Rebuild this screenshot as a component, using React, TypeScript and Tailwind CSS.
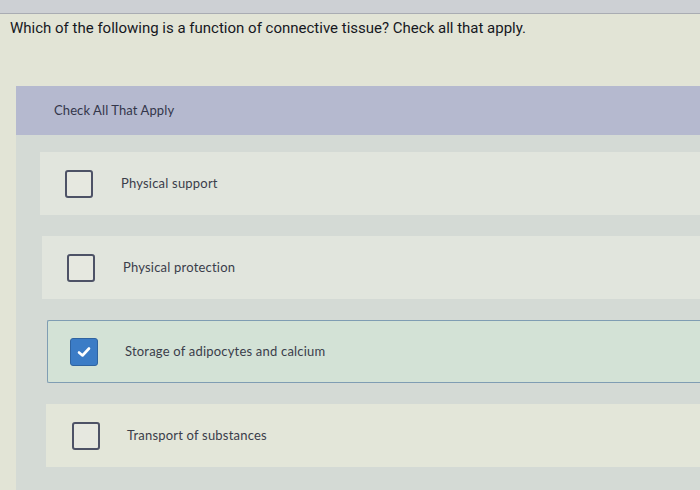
import React from "react";

const options = [
  { label: "Physical support", checked: false, ml: "ml-[24px]", pad: "pl-[25px]", gap: "gap-[28px]" },
  { label: "Physical protection", checked: false, ml: "ml-[26px]", pad: "pl-[25px]", gap: "gap-[28px]" },
  { label: "Storage of adipocytes and calcium", checked: true, ml: "ml-[31px]", pad: "pl-[22px]", gap: "gap-[27px]" },
  { label: "Transport of substances", checked: false, ml: "ml-[30px]", pad: "pl-[26px]", gap: "gap-[27px]" },
];

function Box({ checked }: { checked: boolean }) {
  if (checked) {
    return (
      <div className="w-[28px] h-[28px] rounded-[3px] bg-[#3b7cc6] border border-[#2f63a0] flex items-center justify-center">
        <svg width="14" height="12" viewBox="0 0 14 12">
          <path d="M2 6.5 L5.5 9.5 L12 2.5" stroke="#fff" strokeWidth="2.6" fill="none" strokeLinecap="round" strokeLinejoin="round" />
        </svg>
      </div>
    );
  }
  return <div className="w-[28px] h-[28px] rounded-[3px] border-2 border-[#4d5266] bg-[#e6e8e0]" />;
}

export default function App() {
  return (
    <div
      className="w-[700px] h-[490px] overflow-hidden bg-[#e2e4d6] flex flex-col"
      style={{ fontFamily: "Lato, 'Open Sans', sans-serif" }}
    >
      <div className="h-[14px] bg-[#cdd0d4] border-b border-[#a9acb3]" />
      <div
        className="pl-[10px] pt-[3px] h-[72px] text-[15px] text-[#16181e]"
        style={{ fontFamily: "Roboto, 'Liberation Sans', sans-serif" }}
      >
        Which of the following is a function of connective tissue? Check all that apply.
      </div>
      <div className="ml-[16px] flex-1 bg-[#d4dad5] flex flex-col">
        <div className="h-[49px] bg-[#b5b9cf] flex items-center pl-[38px] text-[13px] text-[#33364a] tracking-[0.1px]">
          Check All That Apply
        </div>
        <div className="flex flex-col pt-[17px] gap-[21px]">
          {options.map((o, i) => (
            <div
              key={i}
              className={`${o.ml} h-[63px] flex items-center ${o.pad} ${o.gap} ${
                o.checked
                  ? "bg-[#d3e2d6] border border-r-0 border-[#7f9db3] rounded-l-[2px]"
                  : i === 3
                  ? "bg-[#e3e6d9]"
                  : "bg-[#e1e5dd]"
              }`}
            >
              <Box checked={o.checked} />
              <span className="text-[13px] text-[#3a3d4a] tracking-[0.2px]">{o.label}</span>
            </div>
          ))}
        </div>
      </div>
    </div>
  );
}
